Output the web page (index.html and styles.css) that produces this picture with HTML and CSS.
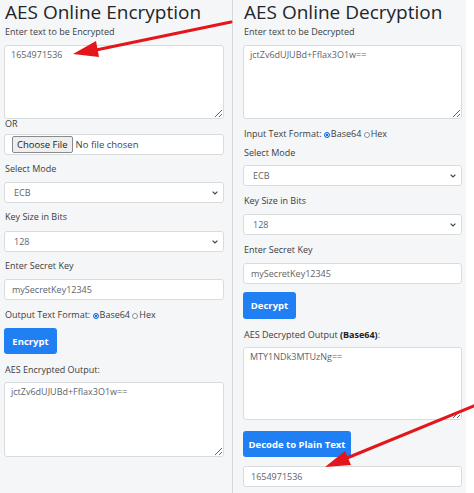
FILE: index.html
```html
<!DOCTYPE html>
<html>
<head>
<meta charset="utf-8">
<link rel="stylesheet" href="styles.css">
</head>
<body>
<div class="page">
  <section class="panel panel-left">
    <h1 class="title">AES Online Encryption</h1>
    <label class="lbl mt-2">Enter text to be Encrypted</label>
    <textarea class="area area-lg mt-7">1654971536</textarea>
    <div class="or">OR</div>
    <div class="file mt-5"><span class="file-btn">Choose File</span><span class="file-txt">No file chosen</span></div>
    <label class="lbl mt-8">Select Mode</label>
    <div class="sel mt-7"><span>ECB</span><svg class="chev" width="6" height="4" viewBox="0 0 6 4"><path d="M0.6 0.6 L3 3 L5.4 0.6" fill="none" stroke="#444" stroke-width="1.2"/></svg></div>
    <label class="lbl mt-8">Key Size in Bits</label>
    <div class="sel mt-8"><span>128</span><svg class="chev" width="6" height="4" viewBox="0 0 6 4"><path d="M0.6 0.6 L3 3 L5.4 0.6" fill="none" stroke="#444" stroke-width="1.2"/></svg></div>
    <label class="lbl mt-8">Enter Secret Key</label>
    <div class="inp mt-7">mySecretKey12345</div>
    <div class="lbl mt-9">Output Text Format: <span class="radio on"></span>Base64 <span class="radio"></span>Hex</div>
    <button class="btn btn-enc mt-7">Encrypt</button>
    <label class="lbl mt-10">AES Encrypted Output:</label>
    <textarea class="area area-out mt-6">jctZv6dUJUBd+Fflax3O1w==</textarea>
  </section>
  <section class="panel panel-right">
    <h1 class="title">AES Online Decryption</h1>
    <label class="lbl mt-2">Enter text to be Decrypted</label>
    <textarea class="area area-lg mt-7">jctZv6dUJUBd+Fflax3O1w==</textarea>
    <div class="lbl mt-9">Input Text Format: <span class="radio on"></span>Base64 <span class="radio"></span>Hex</div>
    <label class="lbl mt-7">Select Mode</label>
    <div class="sel mt-6"><span>ECB</span><svg class="chev" width="6" height="4" viewBox="0 0 6 4"><path d="M0.6 0.6 L3 3 L5.4 0.6" fill="none" stroke="#444" stroke-width="1.2"/></svg></div>
    <label class="lbl mt-9">Key Size in Bits</label>
    <div class="sel mt-7"><span>128</span><svg class="chev" width="6" height="4" viewBox="0 0 6 4"><path d="M0.6 0.6 L3 3 L5.4 0.6" fill="none" stroke="#444" stroke-width="1.2"/></svg></div>
    <label class="lbl mt-9">Enter Secret Key</label>
    <div class="inp mt-7">mySecretKey12345</div>
    <button class="btn btn-dec mt-8">Decrypt</button>
    <div class="lbl mt-10">AES Decrypted Output <b>(Base64)</b>:</div>
    <textarea class="area area-dec mt-6">MTY1NDk3MTUzNg==</textarea>
    <button class="btn btn-decode mt-11">Decode to Plain Text</button>
    <div class="inp mt-9">1654971536</div>
  </section>
  <svg class="arrows" width="474" height="493" viewBox="0 0 474 493">
    <line x1="231" y1="22" x2="96" y2="50" stroke="#e3161b" stroke-width="3" stroke-linecap="round"/>
    <polygon points="73,54 99,57 96,41" fill="#e3161b"/>
    <line x1="476" y1="405" x2="347" y2="458" stroke="#e3161b" stroke-width="3" stroke-linecap="round"/>
    <polygon points="325,467 351,465 345,451" fill="#e3161b"/>
  </svg>
</div>
</body>
</html>
```
FILE: styles.css
```css
* { box-sizing: border-box; }
html, body { margin: 0; padding: 0; background: #ffffff; }
body {
  font-family: "Open Sans", "Noto Sans", sans-serif;
  color: #333;
  width: 474px;
  height: 493px;
  overflow: hidden;
}
.page {
  position: relative;
  display: flex;
  height: 493px;
}
.panel {
  background: #f5f6f8;
  display: flex;
  flex-direction: column;
  align-items: flex-start;
}
.panel-left {
  width: 233px;
  padding: 0 0 0 4px;
  border-right: 1px solid #d4d6d9;
}
.panel-left > * { width: 220px; }
.panel-right {
  width: 233px;
  padding: 0 0 0 10px;
}
.panel-right > * { width: 219px; }
.title {
  margin: 0;
  font-size: 19px;
  line-height: 24px;
  font-weight: 500;
  color: #212529;
  white-space: nowrap;
  padding-left: 1px;
}
.lbl {
  display: block;
  font-size: 9px;
  line-height: 12px;
  color: #3b3d40;
  white-space: nowrap;
  padding-left: 1px;
}
.lbl b { font-weight: 700; color: #222; }
.or {
  font-size: 9px;
  line-height: 10px;
  color: #3b3d40;
  padding-left: 1px;
}
.area {
  display: block;
  resize: vertical;
  margin-left: 0;
  margin-right: 0;
  margin-bottom: 0;
  border: 1px solid #d9dcdf;
  border-radius: 3px;
  background: #fff;
  font-family: "Open Sans", "Noto Sans", sans-serif;
  font-size: 9px;
  line-height: 12px;
  color: #606468;
  padding: 3px 6px;
}
.area-lg { height: 74px; }
.area-out { height: 75px; }
.area-dec { height: 73px; }
.file {
  height: 21px;
  border: 1px solid #d9dcdf;
  border-radius: 3px;
  background: #fff;
  display: flex;
  align-items: center;
  padding-left: 7px;
  font-size: 9.5px;
}
.file-btn {
  height: 17px;
  line-height: 15px;
  padding: 0 4px;
  border: 1px solid #8a8a8a;
  border-radius: 2px;
  background: #efefef;
  color: #222;
}
.file-txt { margin-left: 3px; color: #444; }
.sel, .inp {
  height: 21px;
  border: 1px solid #d9dcdf;
  border-radius: 3px;
  background: #fff;
  display: flex;
  align-items: center;
  justify-content: space-between;
  font-size: 9px;
  color: #606468;
}
.sel { padding: 0 5px 0 9px; }
.inp { padding: 0 6px 0 7px; }
.chev { display: block; }
.radio {
  display: inline-block;
  width: 6px;
  height: 6px;
  border-radius: 50%;
  border: 1px solid #8f8f8f;
  background: #fff;
  vertical-align: -0.5px;
  margin-right: 1px;
}
.radio.on {
  border: 1.5px solid #1a73e8;
  background: #1a73e8;
  box-shadow: inset 0 0 0 0.8px #fff;
}
.btn {
  display: block;
  border: 0;
  border-radius: 3px;
  background: #1f7ff3;
  color: #fff;
  font-family: "Open Sans", "Noto Sans", sans-serif;
  font-weight: 700;
  font-size: 9.5px;
  padding: 0;
  text-align: center;
}
.btn-enc { width: 53px; height: 26px; }
.btn-dec { width: 53px; height: 27px; }
.btn-decode { width: 108px; height: 26px; }
.mt-2 { margin-top: 2px; }
.mt-5 { margin-top: 5px; }
.mt-6 { margin-top: 6px; }
.mt-7 { margin-top: 7px; }
.mt-8 { margin-top: 8px; }
.mt-9 { margin-top: 9px; }
.mt-10 { margin-top: 10px; }
.mt-11 { margin-top: 11px; }
.arrows {
  position: absolute;
  left: 0;
  top: 0;
  pointer-events: none;
}
```
